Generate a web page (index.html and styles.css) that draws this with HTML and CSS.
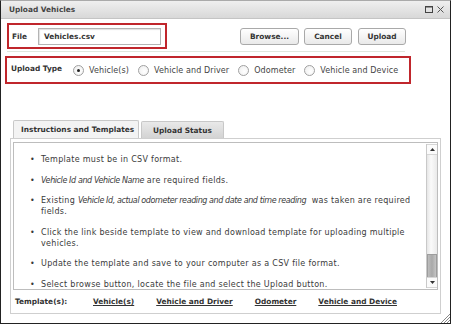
FILE: index.html
```html
<!DOCTYPE html>
<html>
<head>
<meta charset="utf-8">
<link rel="stylesheet" href="styles.css">
</head>
<body>
<div class="window">
  <div class="titlebar">
    <span class="title">Upload Vehicles</span>
    <span class="win-icons">
      <svg width="8" height="7" viewBox="0 0 8 7"><rect x="0.5" y="0.5" width="7" height="6" fill="none" stroke="#444" stroke-width="1"/><line x1="0" y1="1" x2="8" y2="1" stroke="#444" stroke-width="1"/></svg>
      <svg width="7" height="7" viewBox="0 0 7 7"><path d="M0.5 0.5 L6.5 6.5 M6.5 0.5 L0.5 6.5" stroke="#555" stroke-width="1"/></svg>
    </span>
  </div>

  <div class="file-row">
    <div class="file-box">
      <span class="lbl file-lbl">File</span>
      <div class="input">Vehicles.csv</div>
    </div>
    <div class="buttons">
      <span class="btn btn-browse">Browse...</span>
      <span class="btn btn-cancel">Cancel</span>
      <span class="btn btn-upload">Upload</span>
    </div>
  </div>
  <div class="sep"></div>

  <div class="type-box">
    <span class="lbl type-lbl">Upload Type</span>
    <span class="radio checked"></span><span class="rlabel">Vehicle(s)</span>
    <span class="radio"></span><span class="rlabel">Vehicle and Driver</span>
    <span class="radio"></span><span class="rlabel">Odometer</span>
    <span class="radio"></span><span class="rlabel">Vehicle and Device</span>
  </div>

  <div class="tabs">
    <span class="tab active">Instructions and Templates</span>
    <span class="tab">Upload Status</span>
  </div>
  <div class="panel">
    <div class="content">
      <ul class="list">
        <li><span class="dot">•</span><span class="txt">Template must be in CSV format.</span></li>
        <li><span class="dot">•</span><span class="txt"><em>Vehicle Id and Vehicle Name</em> are required fields.</span></li>
        <li><span class="dot">•</span><span class="txt">Existing <em>Vehicle Id, actual odometer reading and date and time reading</em>&nbsp; was taken are required fields.</span></li>
        <li><span class="dot">•</span><span class="txt">Click the link beside template to view and download template for uploading multiple vehicles.</span></li>
        <li><span class="dot">•</span><span class="txt">Update the template and save to your computer as a CSV file format.</span></li>
        <li><span class="dot">•</span><span class="txt">Select browse button, locate the file and select the Upload button.</span></li>
      </ul>
      <div class="scrollbar">
        <div class="sb-btn"><svg width="5" height="3" viewBox="0 0 5 3"><path d="M0 3 L2.5 0 L5 3Z" fill="#333"/></svg></div>
        <div class="sb-track"><div class="sb-thumb"></div></div>
        <div class="sb-btn"><svg width="5" height="3" viewBox="0 0 5 3"><path d="M0 0 L2.5 3 L5 0Z" fill="#333"/></svg></div>
      </div>
    </div>
    <div class="templates">
      <span class="lbl tpl-lbl">Template(s):</span>
      <span class="link">Vehicle(s)</span>
      <span class="link">Vehicle and Driver</span>
      <span class="link">Odometer</span>
      <span class="link">Vehicle and Device</span>
    </div>
  </div>
  <svg class="grip" width="10" height="10" viewBox="0 0 10 10">
    <path d="M10 1 L1 10 M10 4 L4 10 M10 7 L7 10" stroke="#888" stroke-width="1"/>
  </svg>
</div>
</body>
</html>
```

FILE: styles.css
```css
html, body {
  margin: 0;
  padding: 0;
  background: #fff;
}
.window {
  position: relative;
  width: 451px;
  height: 324px;
  box-sizing: border-box;
  border: 1px solid #222;
  border-top-color: #aaa;
  background: #fff;
  font-family: "DejaVu Sans", Verdana, sans-serif;
  font-size: 8px;
  color: #333;
  overflow: hidden;
}
.titlebar {
  height: 17px;
  border-bottom: 1px solid #c4c4c4;
  background: linear-gradient(#efefef, #d8d8d8);
  display: flex;
  align-items: center;
  justify-content: space-between;
  padding: 0 6px 0 8px;
}
.title {
  font-weight: bold;
  font-size: 7.4px;
  color: #444;
}
.win-icons {
  display: flex;
  gap: 4px;
  align-items: center;
}
.lbl {
  font-weight: bold;
  font-size: 7.4px;
  color: #333;
}
.file-row {
  display: flex;
  align-items: center;
  margin-top: 4px;
}
.file-box {
  margin-left: 6px;
  width: 160px;
  height: 26px;
  box-sizing: border-box;
  border: 2px solid #c0262c;
  display: flex;
  align-items: center;
  padding-left: 3px;
}
.file-lbl {
  width: 26px;
}
.input {
  width: 123px;
  height: 17px;
  box-sizing: border-box;
  border: 1px solid #b4b4b4;
  box-shadow: inset 1px 1px 1px #e2e2e2;
  font-weight: bold;
  font-size: 7.4px;
  color: #333;
  padding-left: 5px;
  line-height: 15px;
}
.buttons {
  display: flex;
  margin-left: 73px;
  gap: 5px;
}
.btn {
  height: 17px;
  box-sizing: border-box;
  border: 1px solid #a9a9a9;
  border-radius: 3px;
  background: linear-gradient(#ffffff, #e9e9e9);
  font-weight: bold;
  font-size: 7.4px;
  color: #333;
  display: flex;
  align-items: center;
  justify-content: center;
}
.btn-browse { width: 59px; }
.btn-cancel { width: 48px; }
.btn-upload { width: 48px; margin-left: 1px; }
.sep {
  margin: 2px 0 0 6px;
  width: 398px;
  height: 1px;
  background: #dfe6dd;
}
.type-box {
  margin: 4px 0 0 4px;
  width: 406px;
  height: 28px;
  box-sizing: border-box;
  border: 2px solid #c0262c;
  display: flex;
  align-items: center;
  padding-left: 4px;
}
.type-lbl {
  width: 62px;
  margin-top: -3px;
}
.radio {
  width: 11px;
  height: 11px;
  box-sizing: border-box;
  border: 1px solid #a0a0a0;
  border-radius: 50%;
  background: radial-gradient(circle at 60% 60%, #ffffff, #ececec);
  display: flex;
  align-items: center;
  justify-content: center;
  margin-top: 1px;
}
.radio.checked::after {
  content: "";
  width: 3px;
  height: 3px;
  border-radius: 50%;
  background: #222;
}
.rlabel {
  margin-left: 5px;
  margin-right: 9px;
  color: #444;
  letter-spacing: 0.1px;
}
.tabs {
  margin: 36px 0 0 12px;
  display: flex;
  align-items: flex-end;
  gap: 2px;
  height: 18px;
}
.tab {
  box-sizing: border-box;
  height: 17px;
  padding: 0 11px;
  border: 1px solid #c8c8c8;
  border-bottom: none;
  border-radius: 2px 2px 0 0;
  background: linear-gradient(#e9e9e9, #d3d3d3);
  font-weight: bold;
  font-size: 7.4px;
  color: #333;
  display: flex;
  align-items: center;
}
.tab.active {
  height: 18px;
  width: 126px;
  padding: 0 0 0 7px;
  background: #f3f3f3;
}
.panel {
  margin-left: 9px;
  width: 431px;
  height: 176px;
  box-sizing: border-box;
  border: 1px solid #cfcfcf;
  padding: 3px 2px 0 2px;
  display: flex;
  flex-direction: column;
}
.content {
  height: 148px;
  box-sizing: border-box;
  border: 1px solid #bdbdbd;
  display: flex;
  overflow: hidden;
}
.list {
  flex: 1;
  margin: 0;
  padding: 11px 8px 0 16px;
  list-style: none;
  color: #3a3a3a;
}
.list li {
  display: flex;
  line-height: 11px;
  margin-bottom: 9.5px;
}
.dot {
  width: 11px;
  flex: none;
}
.txt {
  flex: 1;
  letter-spacing: 0.3px;
}
.list em {
  font-style: italic;
  letter-spacing: -0.4px;
}
.scrollbar {
  width: 11px;
  margin: 1px 0 1px 0;
  box-sizing: border-box;
  border-left: 1px solid #c9c9c9;
  display: flex;
  flex-direction: column;
  background: #f3f3f3;
}
.sb-btn {
  height: 9px;
  flex: none;
  display: flex;
  align-items: center;
  justify-content: center;
  background: #fbfbfb;
  border-top: 1px solid #d6d6d6;
  border-bottom: 1px solid #d6d6d6;
}
.sb-track {
  flex: 1;
  display: flex;
  flex-direction: column;
  justify-content: flex-end;
  background: linear-gradient(90deg, #e6e6e6, #fafafa 40%, #eaeaea);
}
.sb-thumb {
  height: 22px;
  background: linear-gradient(90deg, #bdbdbd, #a9a9a9 50%, #c4c4c4);
  border: 1px solid #9d9d9d;
  border-bottom: none;
}
.templates {
  flex: 1;
  display: flex;
  align-items: center;
  padding-left: 2px;
  gap: 22px;
}
.tpl-lbl {
  width: 56px;
}
.link {
  font-weight: bold;
  font-size: 7.4px;
  color: #333;
  text-decoration: underline;
}
.grip {
  position: absolute;
  right: 0;
  bottom: 0;
}
```
